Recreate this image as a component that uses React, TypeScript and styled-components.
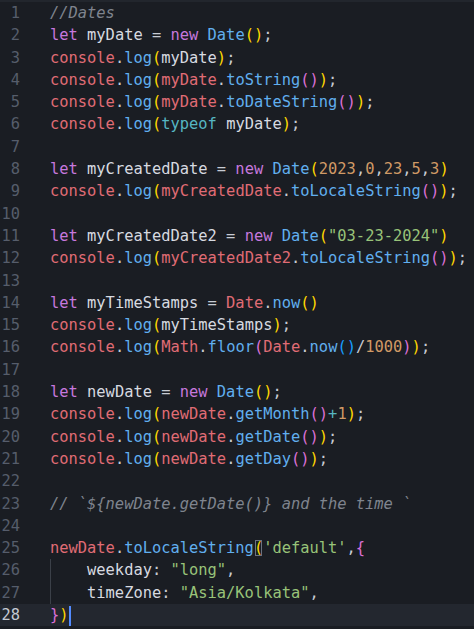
import React from "react";
import styled, { createGlobalStyle, css } from "styled-components";

const Global = createGlobalStyle`
  html, body { margin: 0; padding: 0; background: #1b1e24; }
  #root { width: 474px; height: 629px; }
`;

type Kind =
  | "kw"
  | "id"
  | "cls"
  | "obj"
  | "fn"
  | "b1"
  | "b2"
  | "b3"
  | "num"
  | "str"
  | "com"
  | "op"
  | "ty"
  | "pun";

const colors: Record<Kind, string> = {
  kw: "#c678dd",
  id: "#d7dae0",
  cls: "#61afef",
  obj: "#e06c75",
  fn: "#61afef",
  b1: "#ffd700",
  b2: "#da70d6",
  b3: "#179fff",
  num: "#d19a66",
  str: "#98c379",
  com: "#7f848e",
  op: "#c8ccd4",
  ty: "#56b6c2",
  pun: "#c8ccd4",
};

const Editor = styled.div`
  width: 474px;
  height: 629px;
  box-sizing: border-box;
  background: #1a1d23;
  border-top: 2px solid #22262d;
  overflow: hidden;
  font-family: "DejaVu Sans Mono", "Liberation Mono", monospace;
  font-size: 15.4px;
`;

const Row = styled.div<{ $current?: boolean }>`
  display: grid;
  grid-template-columns: 20px 30px 1fr;
  height: 22.3px;
  line-height: 22.3px;
  white-space: pre;
  ${(p) =>
    p.$current &&
    css`
      background: #23272f;
    `}
`;

const LineNo = styled.span<{ $current?: boolean }>`
  text-align: right;
  color: ${(p) => (p.$current ? "#c5cad3" : "#565d6b")};
`;

const Code = styled.span`
  grid-column: 3;
  position: relative;
`;

const Token = styled.span<{ $kind: Kind; $match?: boolean }>`
  color: ${(p) => colors[p.$kind]};
  font-style: ${(p) => (p.$kind === "com" ? "italic" : "normal")};
  ${(p) =>
    p.$match &&
    css`
      outline: 1px solid #6b7280;
      outline-offset: -2px;
    `}
`;

const Guide = styled.span`
  position: absolute;
  left: 0;
  top: 0;
  bottom: 0;
  width: 1px;
  background: #3b4048;
`;

const Cursor = styled.span`
  display: inline-block;
  width: 2px;
  height: 20px;
  vertical-align: middle;
  background: #528bff;
`;

type Tok = [Kind, string] | [Kind, string, true];

const lines: Tok[][] = [
  [["com", "//Dates"]],
  [["kw", "let"], ["id", " myDate "], ["op", "="], ["kw", " new "], ["cls", "Date"], ["b1", "()"], ["pun", ";"]],
  [["obj", "console"], ["pun", "."], ["fn", "log"], ["b1", "("], ["id", "myDate"], ["b1", ")"], ["pun", ";"]],
  [["obj", "console"], ["pun", "."], ["fn", "log"], ["b1", "("], ["obj", "myDate"], ["pun", "."], ["fn", "toString"], ["b2", "()"], ["b1", ")"], ["pun", ";"]],
  [["obj", "console"], ["pun", "."], ["fn", "log"], ["b1", "("], ["obj", "myDate"], ["pun", "."], ["fn", "toDateString"], ["b2", "()"], ["b1", ")"], ["pun", ";"]],
  [["obj", "console"], ["pun", "."], ["fn", "log"], ["b1", "("], ["ty", "typeof"], ["id", " myDate"], ["b1", ")"], ["pun", ";"]],
  [],
  [["kw", "let"], ["id", " myCreatedDate "], ["op", "="], ["kw", " new "], ["cls", "Date"], ["b1", "("], ["num", "2023"], ["pun", ","], ["num", "0"], ["pun", ","], ["num", "23"], ["pun", ","], ["num", "5"], ["pun", ","], ["num", "3"], ["b1", ")"]],
  [["obj", "console"], ["pun", "."], ["fn", "log"], ["b1", "("], ["obj", "myCreatedDate"], ["pun", "."], ["fn", "toLocaleString"], ["b2", "()"], ["b1", ")"], ["pun", ";"]],
  [],
  [["kw", "let"], ["id", " myCreatedDate2 "], ["op", "="], ["kw", " new "], ["cls", "Date"], ["b1", "("], ["str", "\"03-23-2024\""], ["b1", ")"]],
  [["obj", "console"], ["pun", "."], ["fn", "log"], ["b1", "("], ["obj", "myCreatedDate2"], ["pun", "."], ["fn", "toLocaleString"], ["b2", "()"], ["b1", ")"], ["pun", ";"]],
  [],
  [["kw", "let"], ["id", " myTimeStamps "], ["op", "="], ["obj", " Date"], ["pun", "."], ["fn", "now"], ["b1", "()"]],
  [["obj", "console"], ["pun", "."], ["fn", "log"], ["b1", "("], ["id", "myTimeStamps"], ["b1", ")"], ["pun", ";"]],
  [["obj", "console"], ["pun", "."], ["fn", "log"], ["b1", "("], ["obj", "Math"], ["pun", "."], ["fn", "floor"], ["b2", "("], ["obj", "Date"], ["pun", "."], ["fn", "now"], ["b3", "()"], ["op", "/"], ["num", "1000"], ["b2", ")"], ["b1", ")"], ["pun", ";"]],
  [],
  [["kw", "let"], ["id", " newDate "], ["op", "="], ["kw", " new "], ["cls", "Date"], ["b1", "()"], ["pun", ";"]],
  [["obj", "console"], ["pun", "."], ["fn", "log"], ["b1", "("], ["obj", "newDate"], ["pun", "."], ["fn", "getMonth"], ["b2", "()"], ["ty", "+"], ["num", "1"], ["b1", ")"], ["pun", ";"]],
  [["obj", "console"], ["pun", "."], ["fn", "log"], ["b1", "("], ["obj", "newDate"], ["pun", "."], ["fn", "getDate"], ["b2", "()"], ["b1", ")"], ["pun", ";"]],
  [["obj", "console"], ["pun", "."], ["fn", "log"], ["b1", "("], ["obj", "newDate"], ["pun", "."], ["fn", "getDay"], ["b2", "()"], ["b1", ")"], ["pun", ";"]],
  [],
  [["com", "// `${newDate.getDate()} and the time `"]],
  [],
  [["obj", "newDate"], ["pun", "."], ["fn", "toLocaleString"], ["b1", "(", true], ["str", "'default'"], ["pun", ","], ["b2", "{"]],
  [["id", "    weekday"], ["pun", ": "], ["str", "\"long\""], ["pun", ","]],
  [["id", "    timeZone"], ["pun", ": "], ["str", "\"Asia/Kolkata\""], ["pun", ","]],
  [["b2", "}"], ["b1", ")"]],
];

export default function App() {
  return (
    <>
      <Global />
      <Editor>
        {lines.map((toks, i) => {
          const n = i + 1;
          const current = n === 28;
          return (
            <Row key={n} $current={current}>
              <LineNo $current={current}>{n}</LineNo>
              <Code>
                {(n === 26 || n === 27) && <Guide />}
                {toks.map((t, j) => (
                  <Token key={j} $kind={t[0]} $match={t[2] === true}>
                    {t[1]}
                  </Token>
                ))}
                {current && <Cursor />}
              </Code>
            </Row>
          );
        })}
      </Editor>
    </>
  );
}
